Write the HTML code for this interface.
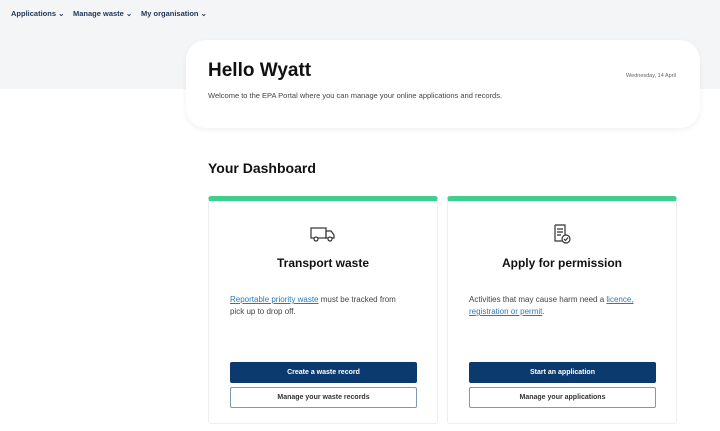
<!DOCTYPE html>
<html><head><style>
*{box-sizing:border-box;margin:0;padding:0}
body{width:720px;height:431px;overflow:hidden;background:#fff;font-family:"Liberation Sans",sans-serif;position:relative;color:#222}
.top{position:absolute;left:0;top:0;width:720px;height:89px;background:#f4f5f7}
.nav{position:absolute;top:9px;font-size:7.5px;color:#1d3557;font-weight:bold}
.hello{position:absolute;left:186px;top:40px;width:514px;height:88px;background:#fff;border-radius:20px;box-shadow:0 2px 6px rgba(0,0,0,.06)}
h1{position:absolute;left:22px;top:20px;font-size:19px;color:#111}
.wel{position:absolute;left:22px;top:51px;font-size:7.5px;color:#444}
.date{position:absolute;right:24px;top:33px;font-size:5.5px;color:#666}
h2{position:absolute;left:208px;top:160px;font-size:14px;color:#111}
.card{position:absolute;top:196px;width:230px;height:228px;border:1px solid #eee;border-top:5px solid #3ecf8e;border-radius:3px}
.card h3{position:absolute;width:100%;text-align:center;top:55px;font-size:12px;color:#111}
.card p{position:absolute;left:21px;right:30px;top:93px;font-size:8px;line-height:12px;color:#444}
a{color:#2a7ab8;text-decoration:underline}
.b{position:absolute;left:21px;width:187px;height:21px;font-size:7px;font-weight:bold;display:flex;align-items:center;justify-content:center;border-radius:2px}
.b1{top:161px;background:#0b3a6e;color:#fff}
.b2{top:186px;border:1px solid #7f98b5;color:#333;background:#fff}
.icon{position:absolute;left:50%;transform:translateX(-50%);top:25px}
</style></head><body>
<div class="top"></div>
<div class="nav" style="left:11px">Applications ⌄</div>
<div class="nav" style="left:73px">Manage waste ⌄</div>
<div class="nav" style="left:141px">My organisation ⌄</div>
<div class="hello"><h1>Hello Wyatt</h1><div class="date">Wednesday, 14 April</div><div class="wel">Welcome to the EPA Portal where you can manage your online applications and records.</div></div>
<h2>Your Dashboard</h2>
<div class="card" style="left:208px">
<svg class="icon" width="26" height="16" viewBox="0 0 26 16" fill="none" stroke="#333" stroke-width="1.2"><rect x="1" y="2" width="15" height="10"/><path d="M16 5h5l3 4v3h-8z"/><circle cx="6" cy="13" r="2" fill="#fff"/><circle cx="20" cy="13" r="2" fill="#fff"/></svg>
<h3>Transport waste</h3>
<p><a>Reportable priority waste</a> must be tracked from pick up to drop off.</p>
<div class="b b1">Create a waste record</div><div class="b b2">Manage your waste records</div></div>
<div class="card" style="left:447px">
<svg class="icon" width="20" height="20" viewBox="0 0 20 20" fill="none" stroke="#333" stroke-width="1.2" style="top:23px"><path d="M3 1h10v11M3 1v16h8"/><path d="M5 5h6M5 8h6M5 11h4"/><circle cx="14" cy="15" r="4" fill="#fff"/><path d="M12 15l1.5 1.5 2.5-3"/></svg>
<h3>Apply for permission</h3>
<p>Activities that may cause harm need a <a>licence, registration or permit</a>.</p>
<div class="b b1">Start an application</div><div class="b b2">Manage your applications</div></div>
</body></html>
